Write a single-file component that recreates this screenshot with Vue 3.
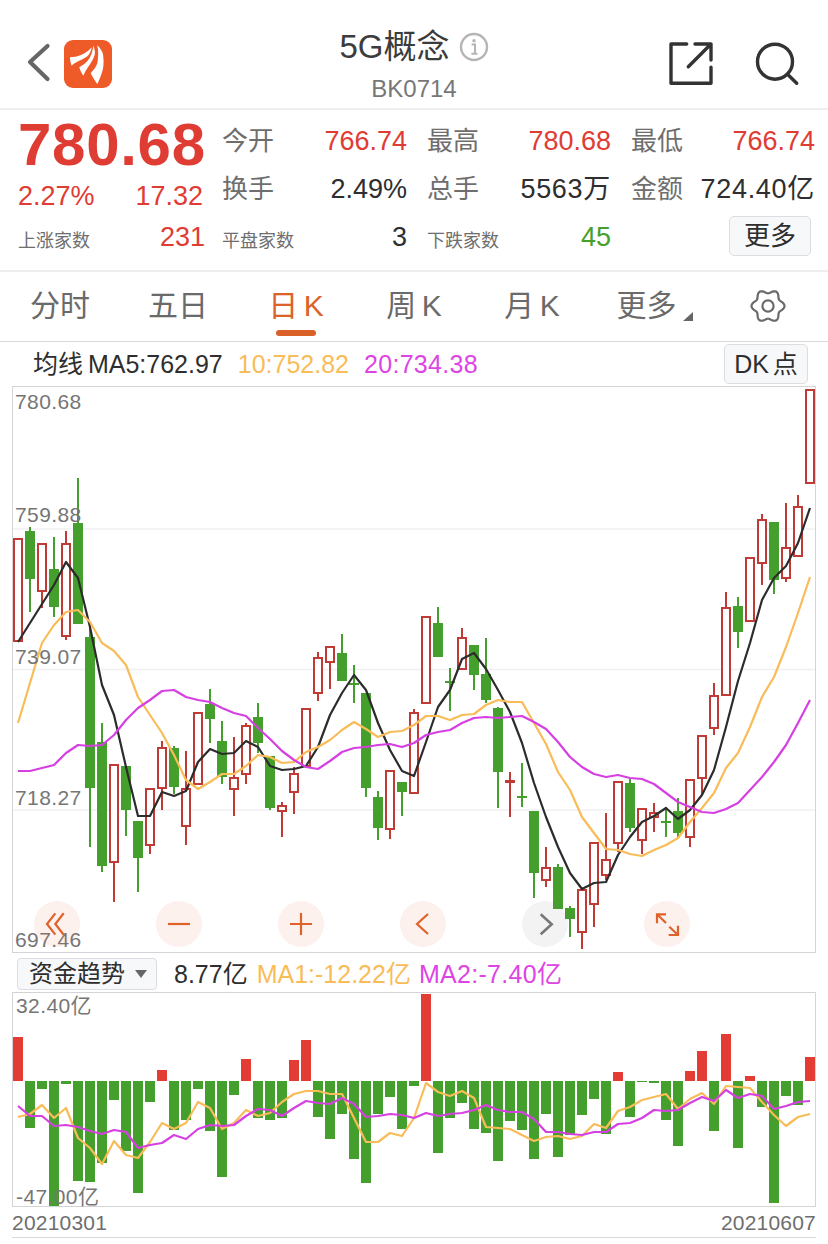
<script setup>
const xs = Array.from({ length: 67 }, (_, i) => 18 + i * 12)

// [type, high, top, bottom, low]; r = hollow red, g = solid green, d = green doji
const raw = [
  ['r',538,538,642,642],['g',527,531,579,612],['r',543,543,592,608],['g',537,569,607,617],['r',531,543,637,640],
  ['g',478,523,624,624],['g',627,637,788,847],['g',723,742,866,872],['r',764,764,863,902],['g',766,766,810,836],
  ['g',821,821,858,892],['r',788,788,846,854],['r',741,747,789,810],['g',746,748,787,794],['r',751,788,827,845],
  ['r',712,712,785,785],['g',689,704,719,743],['g',721,741,777,784],['r',737,777,790,816],['r',723,725,775,784],
  ['g',703,717,743,753],['g',756,756,808,810],['r',802,805,812,837],['r',767,773,793,814],['r',708,708,767,767],
  ['r',652,657,694,701],['r',646,646,663,689],['g',634,653,681,681],['d',665,684,684,703],['g',693,693,788,797],
  ['g',791,797,828,840],['r',770,770,830,839],['g',782,782,792,816],['r',709,712,794,794],['r',616,616,704,704],
  ['g',607,623,657,657],['d',668,682,682,711],['r',628,637,670,670],['g',645,645,675,690],['g',638,674,700,703],
  ['g',707,708,772,808],['r',772,780,783,817],['d',763,797,797,807],['g',811,811,873,898],['r',847,867,881,887],
  ['g',864,867,909,909],['g',906,908,919,937],['r',889,889,933,949],['r',842,842,905,927],['r',813,859,876,880],
  ['r',781,781,844,852],['g',778,783,828,832],['r',808,808,841,854],['r',803,812,818,832],['d',807,822,822,837],
  ['g',798,811,833,837],['r',779,779,838,847],['r',735,735,779,795],['r',683,695,729,735],['r',592,607,696,696],
  ['g',597,606,632,648],['r',557,557,622,622],['r',514,519,564,585],['g',522,522,580,594],['r',503,547,579,582],
  ['r',495,506,557,557],['r',389,389,484,484]
]
const candles = raw.map((c, i) => ({ x: xs[i], t: c[0], hi: c[1], top: c[2], bot: c[3], lo: c[4] }))

const pts = (ys) => ys.map((y, i) => `${xs[i]},${y}`).join(' ')

const ma5 = pts([642,623,604,585,562,578,627,685,715,767,816,816,792,796,791,762,749,754,753,741,747,766,770,769,766,747,715,693,675,690,723,750,771,776,742,707,690,659,653,669,690,712,743,783,817,847,873,889,883,882,855,837,822,816,808,819,810,795,770,727,681,643,600,578,566,543,508])
const ma10 = pts([723,683,643,625,612,610,622,643,651,665,697,715,733,755,780,789,782,774,774,766,755,757,763,762,752,747,740,730,722,729,737,732,731,725,716,716,720,715,714,705,700,702,702,723,744,772,790,817,833,849,850,854,856,850,845,838,822,808,793,768,753,727,697,677,647,613,577])
const ma20 = pts([771,771,768,765,753,745,746,745,735,720,708,700,691,690,697,700,702,708,713,716,728,739,751,760,767,769,761,752,748,747,745,744,747,743,735,732,730,723,718,717,718,717,716,722,729,742,757,767,774,777,775,778,779,784,793,802,807,812,813,809,803,790,777,762,745,723,700])

const zero = 1081
const barEnds = [1037,1128,1089,1207,1084,1181,1182,1163,1100,1151,1193,1102,1070,1130,1120,1089,1131,1177,1095,1059,1118,1120,1118,1060,1040,1117,1139,1114,1159,1183,1114,1097,1129,1086,994,1153,1118,1103,1129,1133,1161,1121,1130,1159,1114,1157,1135,1115,1099,1134,1072,1117,1082,1083,1120,1146,1071,1051,1131,1034,1148,1076,1107,1203,1096,1105,1057]
const bars = barEnds.map((e, i) => ({
  x: xs[i] - 5,
  y: Math.min(e, zero),
  h: Math.abs(e - zero),
  up: e < zero
}))
const ma1 = pts([1117,1114,1105,1118,1108,1138,1148,1164,1141,1155,1158,1142,1123,1129,1123,1102,1108,1129,1123,1110,1116,1113,1102,1094,1091,1091,1094,1094,1118,1142,1142,1133,1136,1118,1083,1092,1096,1091,1098,1127,1128,1129,1135,1141,1137,1136,1139,1136,1124,1128,1111,1107,1100,1097,1094,1109,1099,1093,1104,1086,1087,1088,1102,1115,1126,1117,1114])
const ma2 = pts([1106,1116,1116,1126,1125,1127,1131,1134,1130,1132,1148,1145,1143,1135,1139,1129,1125,1126,1125,1116,1109,1110,1116,1108,1101,1103,1104,1098,1104,1117,1116,1114,1115,1118,1113,1116,1114,1113,1110,1105,1110,1112,1112,1119,1132,1132,1134,1135,1132,1132,1124,1123,1118,1110,1111,1110,1103,1097,1101,1090,1098,1094,1096,1109,1106,1102,1101])

const gridLines = [529, 669.5, 810]
const axisLabels = [
  { t: '780.68', y: 409 },
  { t: '759.88', y: 522 },
  { t: '739.07', y: 664 },
  { t: '718.27', y: 805 },
  { t: '697.46', y: 947 }
]

// six-lobed gear outline
const gear = Array.from({ length: 121 }, (_, i) => {
  const a = (i / 120) * Math.PI * 2
  const r = 14.6 + 1.9 * Math.cos(6 * a)
  return `${(18 + r * Math.cos(a)).toFixed(2)},${(18 + r * Math.sin(a)).toFixed(2)}`
}).join(' ')

const tabs = [
  { t: '分时' }, { t: '五日' }, { t: '日 K', active: true }, { t: '周 K' }, { t: '月 K' }
]
</script>

<template>
  <div class="page">
    <header class="top">
      <div class="nav-left">
        <svg class="back" width="26" height="40" viewBox="0 0 26 40">
          <polyline points="21.5,3 4,19 21.5,36" />
        </svg>
        <svg class="logo" width="48" height="48" viewBox="0 0 48 48">
          <rect width="48" height="48" rx="9" fill="#ee5b28" />
          <path d="M6 17.3C13 17 21 15 27.7 7.3C27 12 25 15 22.7 16.7C17 20.5 11 22 7.7 25.7C6.5 23 6 20 6 17.3Z" fill="#fff" />
          <path d="M29.3 5.7C31.2 10 31.5 14 30 16.7C28.5 21 26 24 24.3 26.7C22.5 29.5 20.5 32.5 19.3 35.7C17.5 33 16 30 15.3 27.3C19 25 22 23 24.3 20C27 16.5 28.8 11 29.3 5.7Z" fill="#fff" />
          <path d="M33.3 5C37 9 39.5 13 39.3 16.7C40 23 39.5 28 37.7 33.3C36.5 37 35 41 33.3 44C31 41 28.5 37 26.7 33.3C29.5 30 32 27 33.3 23.3C34.5 17 34.5 11 33.3 5Z" fill="#fff" />
        </svg>
      </div>
      <div class="title-box">
        <div class="title">
          <span>5G概念</span>
          <svg class="info" width="30" height="30" viewBox="0 0 30 30">
            <circle cx="15" cy="15" r="13" fill="none" stroke="#b5b5b5" stroke-width="2.4" />
            <circle cx="15" cy="8.8" r="1.7" fill="#b5b5b5" />
            <path d="M12.6 12.6h3.4v9M12.4 21.8h6" fill="none" stroke="#b5b5b5" stroke-width="2" />
          </svg>
        </div>
        <div class="code">BK0714</div>
      </div>
      <div class="nav-right">
        <svg width="48" height="46" viewBox="0 0 48 46" class="ic-dark">
          <path d="M20.7 4H5V43.3H45V27.3" />
          <path d="M22.3 26.7L45 4M29 4H45V20" />
        </svg>
        <svg width="46" height="46" viewBox="0 0 46 46" class="ic-dark">
          <circle cx="21" cy="21.7" r="17.5" />
          <path d="M34.3 35L42.7 43.3" />
        </svg>
      </div>
    </header>

    <section class="stats">
      <div class="price-block first">
        <div class="price">780.68</div>
        <div class="price-sub"><span>2.27%</span><span>17.32</span></div>
      </div>
      <div class="cell"><span class="lb">今开</span><span class="red">766.74</span></div>
      <div class="cell"><span class="lb">最高</span><span class="red">780.68</span></div>
      <div class="cell"><span class="lb">最低</span><span class="red">766.74</span></div>
      <div class="cell"><span class="lb">换手</span><span>2.49%</span></div>
      <div class="cell"><span class="lb">总手</span><span class="wide">5563万</span></div>
      <div class="cell"><span class="lb">金额</span><span class="wide">724.40亿</span></div>
      <div class="cell first"><span class="lb-sm">上涨家数</span><span class="red">231</span></div>
      <div class="cell"><span class="lb-sm">平盘家数</span><span>3</span></div>
      <div class="cell"><span class="lb-sm">下跌家数</span><span class="green">45</span></div>
      <div class="cell more-cell"><span class="more-btn">更多</span></div>
    </section>

    <nav class="tabs">
      <div v-for="tab in tabs" :key="tab.t" class="tab" :class="{ active: tab.active }">{{ tab.t }}</div>
      <div class="tab tab-more">
        更多
        <svg class="tri" width="10" height="9" viewBox="0 0 10 9"><polygon points="0,9 10,9 10,0" fill="#666" /></svg>
      </div>
      <div class="tab">
        <svg width="36" height="36" viewBox="0 0 36 36">
          <polygon :points="gear" fill="none" stroke="#6a6a6a" stroke-width="2.2" stroke-linejoin="round" />
          <circle cx="18" cy="18" r="5.6" fill="none" stroke="#6a6a6a" stroke-width="2.2" />
        </svg>
      </div>
    </nav>

    <div class="ma-row">
      <div class="ma-text">
        <span class="ma-first">均线 MA5:762.97</span>
        <span class="c-orange">10:752.82</span>
        <span class="c-purple">20:734.38</span>
      </div>
      <span class="dk-btn">DK 点</span>
    </div>

    <div class="main-chart">
      <svg class="chart" width="828" height="568" viewBox="0 386 828 568">
        <line v-for="y in gridLines" :key="y" x1="13" x2="815" :y1="y" :y2="y" stroke="#f0f0f4" stroke-width="1.5" />
        <g v-for="c in candles" :key="c.x">
          <template v-if="c.t === 'r'">
            <line :x1="c.x" :x2="c.x" :y1="c.hi" :y2="c.lo" stroke="#c23a36" stroke-width="2" />
            <rect :x="c.x - 4" :y="c.top + 1" width="8" :height="Math.max(c.bot - c.top - 2, 1)" fill="#fff" stroke="#c23a36" stroke-width="2" />
          </template>
          <template v-else-if="c.t === 'g'">
            <line :x1="c.x" :x2="c.x" :y1="c.hi" :y2="c.lo" stroke="#459f2c" stroke-width="2" />
            <rect :x="c.x - 5" :y="c.top" width="10" :height="c.bot - c.top" fill="#459f2c" />
          </template>
          <template v-else>
            <line :x1="c.x" :x2="c.x" :y1="c.hi" :y2="c.lo" stroke="#459f2c" stroke-width="2" />
            <line :x1="c.x - 5" :x2="c.x + 5" :y1="c.top" :y2="c.top" stroke="#459f2c" stroke-width="2" />
          </template>
        </g>
        <polyline :points="ma5" class="ln" stroke="#2c2c2c" />
        <polyline :points="ma10" class="ln" stroke="#f8bc58" />
        <polyline :points="ma20" class="ln" stroke="#d640e2" />
        <rect x="12.5" y="386.5" width="803" height="566" fill="none" stroke="#d4d4d8" />
        <text v-for="l in axisLabels" :key="l.t" x="15" :y="l.y" class="axis">{{ l.t }}</text>
      </svg>
      <div class="zoom-btns">
        <div class="z-btn">
          <svg width="46" height="46" viewBox="0 0 46 46" class="ic-orange"><path d="M21.3 12.3L13 23L21.3 33.7M29.7 12.3L21.3 23L29.7 33.7" /></svg>
        </div>
        <div class="z-btn">
          <svg width="46" height="46" viewBox="0 0 46 46" class="ic-orange"><path d="M12 23H34" /></svg>
        </div>
        <div class="z-btn">
          <svg width="46" height="46" viewBox="0 0 46 46" class="ic-orange"><path d="M12 23H34M23 12V34" /></svg>
        </div>
        <div class="z-btn">
          <svg width="46" height="46" viewBox="0 0 46 46" class="ic-orange"><path d="M28 13L17 23L28 33" /></svg>
        </div>
        <div class="z-btn grey">
          <svg width="46" height="46" viewBox="0 0 46 46" class="ic-grey"><path d="M18.7 13.3L29.7 23.3L18.7 33.3" /></svg>
        </div>
        <div class="z-btn">
          <svg width="46" height="46" viewBox="0 0 46 46" class="ic-orange"><path d="M13 22.3V13.3H22M13 13.3L22 22M24.7 34H34V24.7M34 34L25.3 25.7" /></svg>
        </div>
      </div>
    </div>

    <div class="funds-row">
      <span class="select">资金趋势<svg width="12" height="8" viewBox="0 0 12 8"><polygon points="0,0 12,0 6,8" fill="#666" /></svg></span>
      <span class="f-val">8.77亿</span>
      <span class="c-orange f-ma1">MA1:-12.22亿</span>
      <span class="c-purple f-ma2">MA2:-7.40亿</span>
    </div>

    <svg class="chart" width="828" height="216" viewBox="0 992 828 216">
      <rect v-for="b in bars" :key="b.x" :x="b.x" :y="b.y" width="10" :height="b.h" :fill="b.up ? '#e23c34' : '#459f2c'" />
      <polyline :points="ma1" class="ln" stroke="#f8bc58" />
      <polyline :points="ma2" class="ln" stroke="#d640e2" />
      <rect x="12.5" y="992.5" width="803" height="214" fill="none" stroke="#d4d4d8" />
      <text x="16" y="1013" class="axis">32.40亿</text>
      <text x="16" y="1204" class="axis">-47.00亿</text>
    </svg>

    <div class="dates"><span>20210301</span><span>20210607</span></div>
  </div>
</template>

<style scoped>
.page {
  width: 828px;
  height: 1244px;
  overflow: hidden;
  background: #fff;
  color: #2e2e2e;
  font-family: "Liberation Sans", "Noto Sans CJK SC", sans-serif;
}
.top {
  height: 108px;
  border-bottom: 2px solid #eeeeee;
  display: grid;
  grid-template-columns: 1fr auto 1fr;
  padding: 0 26px;
}
.nav-left {
  display: flex;
  align-items: flex-start;
  gap: 12px;
  padding-top: 40px;
}
.back { margin-top: 3px; fill: none; stroke: #666; stroke-width: 4.2; stroke-linecap: round; stroke-linejoin: round; }
.title-box { text-align: center; padding-top: 27px; }
.title {
  display: flex;
  align-items: center;
  gap: 9px;
  font-size: 33px;
  line-height: 40px;
  color: #3c3c3c;
}
.code { font-size: 24px; line-height: 28px; margin-top: 8px; color: #777; }
.nav-right {
  display: flex;
  justify-content: flex-end;
  gap: 40px;
  padding: 40px 2px 0 0;
}
.ic-dark { fill: none; stroke: #333; stroke-width: 3.4; stroke-linecap: round; stroke-linejoin: round; }

.stats {
  display: grid;
  grid-template-columns: 184px 185px 184px 184px;
  grid-auto-rows: 48px;
  column-gap: 20px;
  padding: 7px 13px 9px 18px;
  border-bottom: 2px solid #eeeeee;
  font-size: 27px;
  line-height: 30px;
}
.first { margin-right: -3px; }
.price-block { grid-row: 1 / 3; }
.price {
  font-size: 60px;
  line-height: 44px;
  margin-top: 6px;
  font-weight: 700;
  color: #df3c34;
  letter-spacing: 0.7px;
  white-space: nowrap;
}
.price-sub {
  display: flex;
  justify-content: space-between;
  margin-top: 14px;
  padding-right: 2px;
  color: #df3c34;
}
.cell {
  display: flex;
  justify-content: space-between;
  align-items: center;
  white-space: nowrap;
}
.wide { letter-spacing: 0.7px; }
.lb { color: #6e6e6e; font-size: 26px; }
.lb-sm { color: #6e6e6e; font-size: 18px; padding-top: 8px; }
.red { color: #df3c34; }
.green { color: #46a02c; }
.more-cell { justify-content: flex-end; padding-right: 4px; }
.more-btn {
  width: 80px;
  height: 38px;
  margin-bottom: 3px;
  border: 1px solid #dddddf;
  border-radius: 5px;
  background: #f7f8fa;
  text-align: center;
  font-size: 26px;
  line-height: 38px;
}

.tabs {
  height: 69px;
  border-bottom: 1px solid #dadada;
  display: grid;
  grid-template-columns: repeat(7, 118px);
  padding-left: 1px;
}
.tab {
  position: relative;
  display: flex;
  align-items: center;
  justify-content: center;
  font-size: 30px;
  line-height: 36px;
  color: #6a6a6a;
  word-spacing: -3px;
  padding-bottom: 2px;
}
.tab.active { color: #dc6228; }
.tab.active::after {
  content: "";
  position: absolute;
  left: 39px;
  bottom: 5px;
  width: 40px;
  height: 6px;
  border-radius: 3px;
  background: #d96128;
}
.tab-more { padding-right: 7px; }
.tri { position: absolute; left: 92px; bottom: 20px; }

.ma-row {
  height: 44px;
  display: flex;
  align-items: center;
  justify-content: space-between;
  padding: 0 20px 0 33px;
  font-size: 25px;
  line-height: 30px;
}
.ma-text { display: flex; gap: 15px; white-space: nowrap; }
.ma-first { word-spacing: -2px; }
.c-orange { color: #f8bc58; }
.c-purple { color: #dc45e4; letter-spacing: 0.3px; }
.dk-btn {
  width: 82px;
  height: 38px;
  line-height: 38px;
  border: 1px solid #dddddf;
  border-radius: 5px;
  background: #f7f8fa;
  text-align: center;
  word-spacing: -3px;
}

.main-chart { position: relative; height: 568px; }
.chart { display: block; }
.ln { fill: none; stroke-width: 2.2; stroke-linejoin: round; }
.axis {
  font-size: 21px;
  letter-spacing: 0.4px;
  fill: #767676;
  font-family: "Liberation Sans", "Noto Sans CJK SC", sans-serif;
}
.zoom-btns {
  position: absolute;
  left: 34px;
  top: 515px;
  display: flex;
  gap: 76px;
}
.z-btn {
  width: 46px;
  height: 46px;
  border-radius: 50%;
  background: rgba(226, 100, 40, 0.09);
}
.z-btn.grey { background: rgba(120, 120, 120, 0.09); }
.z-btn svg { display: block; }
.ic-orange { fill: none; stroke: #e0622a; stroke-width: 2.2; }
.ic-grey { fill: none; stroke: #777; stroke-width: 2.6; }

.funds-row {
  height: 36px;
  padding-top: 2px;
  display: flex;
  align-items: center;
  padding-left: 17px;
  font-size: 25px;
  line-height: 30px;
  white-space: nowrap;
}
.select {
  width: 118px;
  height: 30px;
  font-size: 24px;
  border: 1px solid #dcdce2;
  border-radius: 4px;
  background: #f7f8fa;
  display: flex;
  align-items: center;
  justify-content: space-between;
  padding: 0 9px 0 11px;
}
.f-val { margin-left: 17px; }
.f-ma1 { margin-left: 9px; }
.f-ma2 { margin-left: 8px; }

.dates {
  height: 29px;
  display: flex;
  align-items: center;
  justify-content: space-between;
  margin: 0 12px;
  border-bottom: 1px solid #dadada;
  font-size: 21px;
  letter-spacing: 0.2px;
  line-height: 26px;
  color: #6e6e6e;
}
</style>

<style>
body { margin: 0; background: #fff; }
</style>
